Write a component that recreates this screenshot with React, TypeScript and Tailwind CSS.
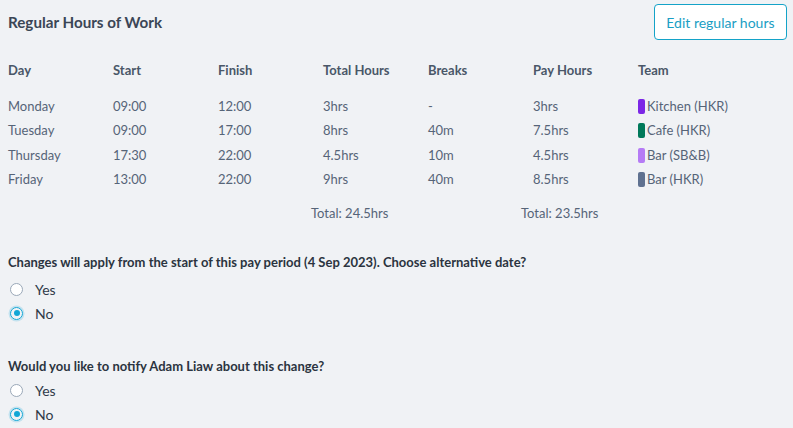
import React from "react";

const rows = [
  { day: "Monday", start: "09:00", finish: "12:00", total: "3hrs", breaks: "-", pay: "3hrs", team: "Kitchen (HKR)", color: "bg-[#7b27e6]" },
  { day: "Tuesday", start: "09:00", finish: "17:00", total: "8hrs", breaks: "40m", pay: "7.5hrs", team: "Cafe (HKR)", color: "bg-[#00795a]" },
  { day: "Thursday", start: "17:30", finish: "22:00", total: "4.5hrs", breaks: "10m", pay: "4.5hrs", team: "Bar (SB&B)", color: "bg-[#b57bf5]" },
  { day: "Friday", start: "13:00", finish: "22:00", total: "9hrs", breaks: "40m", pay: "8.5hrs", team: "Bar (HKR)", color: "bg-[#5f7190]" },
];

function Radio({ checked, label }: { checked: boolean; label: string }) {
  return (
    <div className="flex items-center h-6">
      <div className="w-[27px] flex items-center pl-[2px]">
        {checked ? (
          <span className="w-[13px] h-[13px] rounded-full border-[1.5px] border-[#11a6d6] flex items-center justify-center shadow-[0_0_0_1.5px_rgba(17,166,214,0.2)]">
            <span className="w-[6px] h-[6px] rounded-full bg-[#11a6d6]" />
          </span>
        ) : (
          <span className="w-[13px] h-[13px] rounded-full border border-[#9aa8b8] bg-white" />
        )}
      </div>
      <span className="text-[14px] text-[#2f3a48]">{label}</span>
    </div>
  );
}

export default function App() {
  const grid = "grid grid-cols-[105px_105px_105px_105px_105px_105px_1fr]";
  return (
    <div
      className="w-full h-[428px] bg-[#f0f2f5] px-2 overflow-hidden"
      style={{ fontFamily: "Lato, 'Open Sans', sans-serif" }}
    >
      <div className="flex justify-between items-start">
        <div className="pt-[12px] h-[20px] leading-[20px] text-[15.2px] font-bold text-[#3b4656] box-content">
          Regular Hours of Work
        </div>
        <button className="mt-1 mr-[-2px] h-9 px-[11.5px] rounded border border-[#14a3c8] bg-white text-[#1a9ec4] text-[14px]">
          Edit regular hours
        </button>
      </div>
      <div className={`${grid} mt-[19px] h-6 items-center text-[13px] font-bold text-[#4a5768]`}>
        <div>Day</div>
        <div>Start</div>
        <div>Finish</div>
        <div>Total Hours</div>
        <div>Breaks</div>
        <div>Pay Hours</div>
        <div>Team</div>
      </div>
      <div className="mt-[11px]">
        {rows.map((r) => (
          <div key={r.day} className={`${grid} h-[24.5px] items-center text-[13px] text-[#566478]`}>
            <div>{r.day}</div>
            <div>{r.start}</div>
            <div>{r.finish}</div>
            <div>{r.total}</div>
            <div>{r.breaks}</div>
            <div>{r.pay}</div>
            <div className="flex items-center gap-[2px]">
              <span className={`w-[7px] h-[15px] rounded-[2px] ${r.color}`} />
              <span>{r.team}</span>
            </div>
          </div>
        ))}
      </div>
      <div className={`${grid} mt-[10px] h-6 items-center text-[13px] text-[#566478]`}>
        <div />
        <div />
        <div />
        <div className="-ml-3 whitespace-nowrap">Total: 24.5hrs</div>
        <div />
        <div className="-ml-3 whitespace-nowrap">Total: 23.5hrs</div>
        <div />
      </div>
      <div className="mt-[26px] h-5 leading-5 text-[13px] font-bold text-[#2b3440]">
        Changes will apply from the start of this pay period (4 Sep 2023). Choose alternative date?
      </div>
      <div className="mt-[5px]">
        <Radio checked={false} label="Yes" />
        <Radio checked={true} label="No" />
      </div>
      <div className="mt-[31px] h-5 leading-5 text-[13px] font-bold text-[#2b3440]">
        Would you like to notify Adam Liaw about this change?
      </div>
      <div className="mt-[2px]">
        <Radio checked={false} label="Yes" />
        <Radio checked={true} label="No" />
      </div>
    </div>
  );
}
